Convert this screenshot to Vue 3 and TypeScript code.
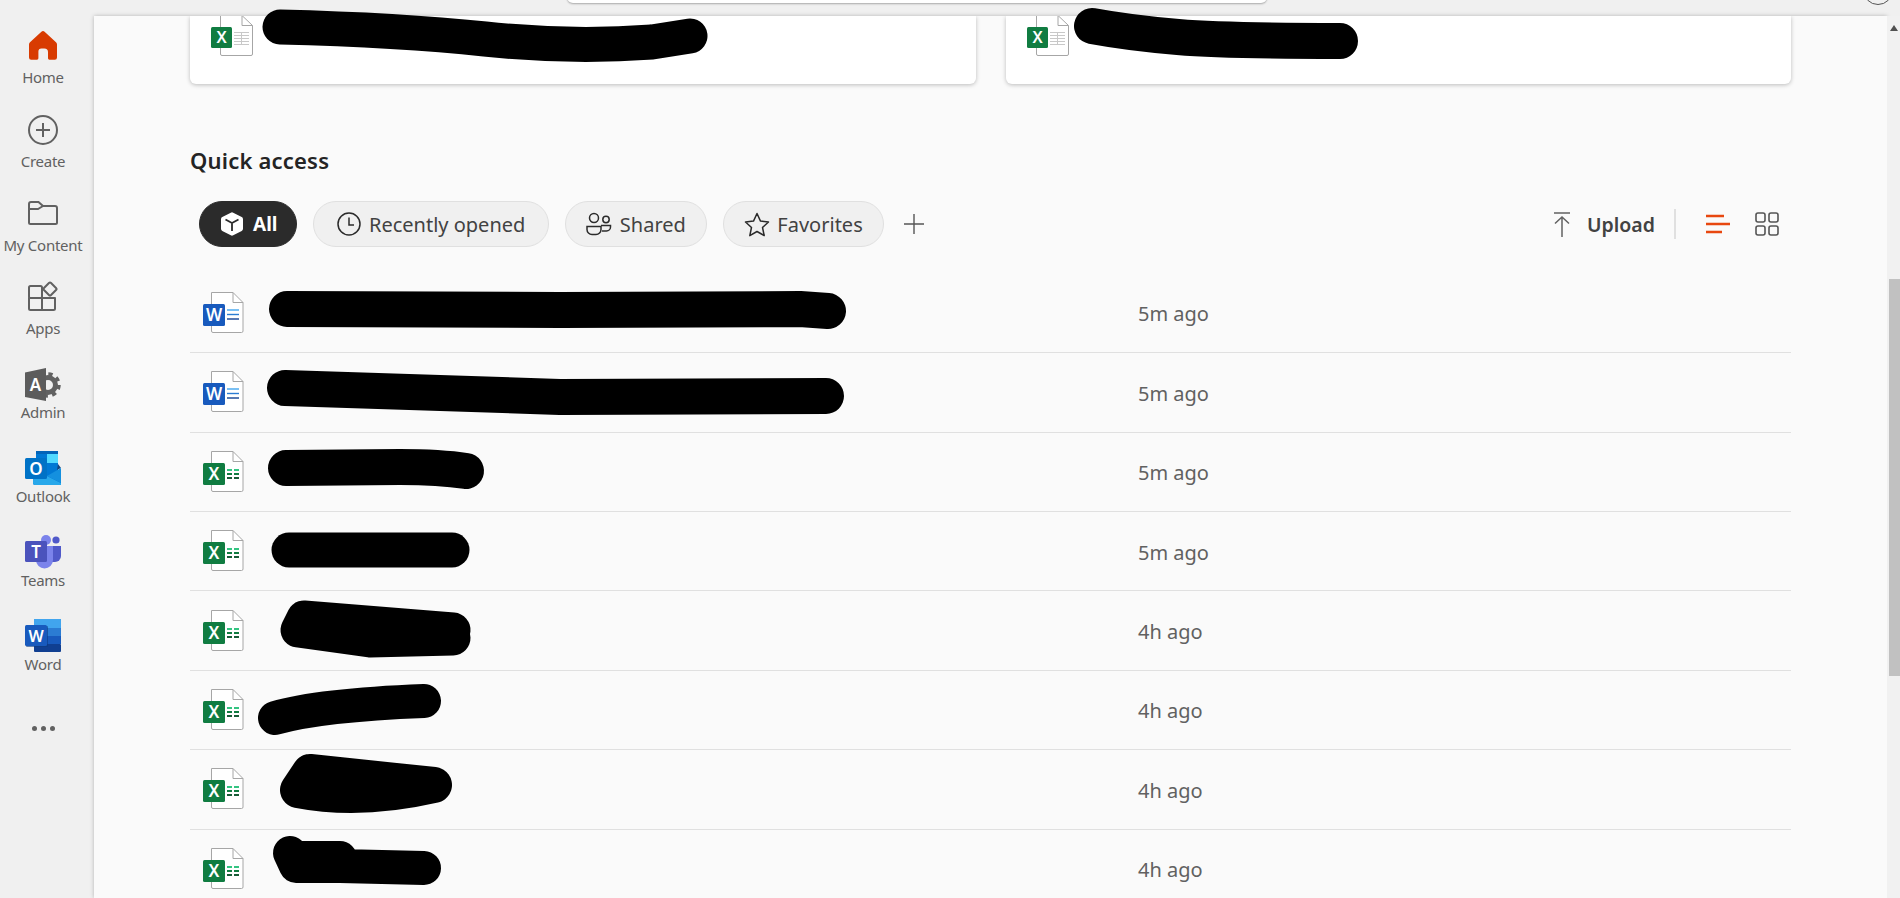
<template>
  <div class="shell">
    <nav class="rail">
      <a v-for="(item, index) in railItems" :key="item.label" class="rail__item">
        <span class="rail__icon" :class="{ 'rail__icon--app': index > 3 }">
          <svg v-if="item.label === 'Home'" width="28" height="29" viewBox="0 0 28 29">
            <path fill="#d83b01" d="M12.4.8a2.3 2.3 0 0 1 3.2 0L27 11.2a3 3 0 0 1 1 2.2v13.1a2.2 2.2 0 0 1-2.2 2.2h-5.4a1.4 1.4 0 0 1-1.4-1.4v-6.2a3.6 3.6 0 0 0-3.6-3.6h-3a3 3 0 0 0-3 3v6.8a1.4 1.4 0 0 1-1.4 1.4H2.200a2.2 2.200 0 0 1-2.200-2.200V13.400a3 3 0 0 1 1-2.200z" />
          </svg>
          <svg v-else-if="item.label === 'Create'" class="rail__create" width="30" height="30" viewBox="0 0 30 30" fill="none" stroke="#616161" stroke-width="2">
            <circle cx="15" cy="15" r="14" />
            <path d="M15 8v14M8 15h14" />
          </svg>
          <svg v-else-if="item.label === 'My Content'" width="30" height="24" viewBox="0 0 30 24" fill="none" stroke="#616161" stroke-width="2">
            <path d="M1 20.500V3a2 2 0 0 1 2-2h7.500l4.500 4h12a2 2 0 0 1 2 2v14.500a1.500 1.500 0 0 1-1.500 1.500H2.500A1.500 1.500 0 0 1 1 21.500z" />
            <path d="M1 8h9l5-3" />
          </svg>
          <svg v-else-if="item.label === 'Apps'" width="30" height="30" viewBox="0 0 30 30" fill="none" stroke="#616161" stroke-width="2" stroke-linejoin="round">
            <rect x="1" y="5" width="13" height="12" rx="1.500" />
            <path d="M1 17h13v12H2.500A1.500 1.500 0 0 1 1 27.500zM14 17h13v10.500a1.500 1.500 0 0 1-1.500 1.500H14z" />
            <rect x="17" y="3" width="10" height="10" rx="1.500" transform="rotate(45 22 8)" />
          </svg>
          <svg v-else-if="item.label === 'Admin'" width="36" height="34" viewBox="0 0 36 34">
            <circle cx="23" cy="17" r="7.500" fill="none" stroke="#616161" stroke-width="5" />
            <circle cx="23" cy="17" r="11" fill="none" stroke="#616161" stroke-width="3.500" stroke-dasharray="4.300 4.340" />
            <path fill="#5c5c5c" d="M0 4.500 21 0v33L0 29z" />
            <text x="10.500" y="23" class="badge-text" font-size="17" text-anchor="middle">A</text>
          </svg>
          <svg v-else-if="item.label === 'Outlook'" width="36" height="34" viewBox="0 0 36 34">
            <rect x="11" y="0" width="22" height="20" fill="#0078d4" />
            <rect x="11" y="0" width="22" height="3" fill="#0364b8" />
            <rect x="22" y="3" width="11" height="9" fill="#50d9ff" />
            <path fill="#14447d" d="M33 13l3 4-4 2z" />
            <path fill="#0078d4" d="M8 20h28v14H10a2 2 0 0 1-2-2z" />
            <path fill="#28a8ea" d="M8 15l14 10 14 7v2H10a2 2 0 0 1-2-2z" />
            <path fill="#1490df" d="M22 25l14-8v15z" />
            <rect x="0" y="7" width="22" height="21" rx="1.500" fill="#0072c6" />
            <text x="11" y="23.500" class="badge-text" font-size="17" text-anchor="middle">O</text>
          </svg>
          <svg v-else-if="item.label === 'Teams'" width="36" height="34" viewBox="0 0 36 34">
            <circle cx="31" cy="5" r="3.600" fill="#5059c9" />
            <path fill="#5059c9" d="M26 11h10v10a6 6 0 0 1-6 6h-4z" />
            <circle cx="21" cy="5" r="5" fill="#7b83eb" />
            <path fill="#7b83eb" d="M11 11h17v14a8.500 8.500 0 0 1-17 0z" />
            <rect x="0" y="6" width="22" height="21" rx="1.500" fill="#4b53bc" />
            <text x="11" y="22.500" class="badge-text" font-size="17" text-anchor="middle">T</text>
          </svg>
          <svg v-else-if="item.label === 'Word'" width="36" height="34" viewBox="0 0 36 34">
            <rect x="9" y="0" width="27" height="9" fill="#41a5ee" />
            <rect x="9" y="9" width="27" height="8" fill="#2b7cd3" />
            <rect x="9" y="17" width="27" height="8" fill="#185abd" />
            <rect x="9" y="25" width="27" height="8" rx="1" fill="#103f91" />
            <rect x="1" y="7" width="22" height="21" rx="1" fill="#0b3a80" opacity="0.6" />
            <rect x="0" y="6" width="22" height="21" rx="1.500" fill="#185abd" />
            <text x="11" y="22.500" class="badge-text" font-size="16" text-anchor="middle">W</text>
          </svg>
        </span>
        <span class="rail__label">{{ item.label }}</span>
      </a>
      <button class="rail__more" type="button" aria-label="More apps">
        <i></i><i></i><i></i>
      </button>
    </nav>

    <div class="stage">
      <header class="topbar">
        <div class="topbar__search"></div>
        <div class="topbar__avatar"></div>
      </header>

      <div class="stage__body">
        <main class="content">
          <section class="cards">
            <article v-for="card in 2" :key="card" class="card">
              <svg class="card__icon" width="42" height="41" viewBox="0 0 42 41">
                <path fill="#fff" stroke="#a6a6a6" d="M9.500.5H31L41.500 10.500V39a1.500 1.500 0 0 1-1.500 1.500H11A1.500 1.500 0 0 1 9.500 39z" />
                <path fill="none" stroke="#a6a6a6" d="M31 .5v10h10.500" />
                <g stroke="#c8c8c8" stroke-width="1">
                  <path d="M23 17.500h15M23 20.500h15M23 23.500h15M23 26.500h15M23 29.500h15M30.500 17v13" />
                </g>
                <rect x="0" y="12" width="21" height="21" rx="1.500" fill="#107c41" />
                <text x="10.500" y="28" class="badge-text" font-size="16" text-anchor="middle">X</text>
              </svg>
            </article>
          </section>

          <h2 class="heading">Quick access</h2>

          <div class="toolbar">
            <div class="chips">
              <button
                v-for="chip in chips"
                :key="chip"
                class="chip"
                :class="{ 'chip--active': chip === 'All', 'chip--wide': chip === 'Recently opened' }"
                type="button"
              >
                <svg v-if="chip === 'All'" width="24" height="24" viewBox="0 0 24 24">
                  <path fill="#fff" d="M10.800.7a2.500 2.500 0 0 1 2.400 0l8.500 4.400A2.300 2.300 0 0 1 23 7.200v9.600a2.300 2.300 0 0 1-1.300 2.100l-8.500 4.400a2.500 2.500 0 0 1-2.400 0l-8.500-4.400A2.300 2.300 0 0 1 1 16.800V7.200a2.300 2.300 0 0 1 1.300-2.100z" />
                  <path fill="none" stroke="#2b2b2b" stroke-width="1.800" d="M5.500 7.500 12 11l6.500-3.500M12 11v8" />
                </svg>
                <svg v-else-if="chip === 'Recently opened'" width="24" height="24" viewBox="0 0 24 24" fill="none" stroke="#2b2b2b" stroke-width="1.500">
                  <circle cx="12" cy="12" r="11" />
                  <path d="M12 5.500V13h5" />
                </svg>
                <svg v-else-if="chip === 'Shared'" width="26" height="24" viewBox="0 0 26 24" fill="none" stroke="#2b2b2b" stroke-width="1.500">
                  <circle cx="8" cy="6" r="4.500" />
                  <circle cx="20" cy="7.500" r="3.200" />
                  <path d="M1 14.500h14v3a5 5 0 0 1-5 5H6a5 5 0 0 1-5-5z" />
                  <path d="M15 13.500h9.500v1.500a4 4 0 0 1-4 4H16" />
                </svg>
                <svg v-else width="26" height="25" viewBox="0 0 26 25" fill="none" stroke="#2b2b2b" stroke-width="1.500" stroke-linejoin="round">
                  <path d="m13 1.500 3.500 7.600 8 .9-6 5.500 1.700 8.100-7.200-4.100-7.200 4.100 1.700-8.100-6-5.500 8-.9z" />
                </svg>
                <span>{{ chip }}</span>
              </button>
              <svg class="chips__add" width="22" height="22" viewBox="0 0 22 22" stroke="#555" stroke-width="1.400">
                <path d="M11 1v20M1 11h20" />
              </svg>
            </div>

            <div class="actions">
              <svg width="16" height="25" viewBox="0 0 16 25" fill="none" stroke="#616161" stroke-width="1.500">
                <path d="M0 1h16M8 25V5M1 11.500 8 5l7 6.500" />
              </svg>
              <span class="actions__upload">Upload</span>
              <span class="actions__divider"></span>
              <svg class="actions__list" width="25" height="20" viewBox="0 0 25 20" stroke="#e8470f" stroke-width="2.400">
                <path d="M0 2h18M0 10h24M0 18h16" />
              </svg>
              <svg width="24" height="24" viewBox="0 0 24 24" fill="none" stroke="#555" stroke-width="1.600">
                <rect x="1" y="1" width="9" height="9" rx="2" />
                <rect x="14" y="1" width="9" height="9" rx="2" />
                <rect x="1" y="14" width="9" height="9" rx="2" />
                <rect x="14" y="14" width="9" height="9" rx="2" />
              </svg>
            </div>
          </div>

          <ul class="files">
            <li v-for="(file, index) in files" :key="index" class="file">
              <svg class="file__icon" width="41" height="41" viewBox="0 0 41 41">
                <path fill="#fff" stroke="#a6a6a6" d="M8.500.5H30L40 10.500V39a1.500 1.500 0 0 1-1.500 1.500H10A1.500 1.500 0 0 1 8.500 39z" />
                <path fill="none" stroke="#a6a6a6" d="M30 .5v10h10" />
                <g v-if="file.kind === 'word'" stroke-width="1.400">
                  <path stroke="#41a5ee" d="M24 18h12" />
                  <path stroke="#2b7cd3" d="M24 22.500h12" />
                  <path stroke="#103f91" d="M24 27h12" />
                </g>
                <g v-else stroke-width="2">
                  <path stroke="#33c481" d="M24 19h5M31 19h5" />
                  <path stroke="#107c41" d="M24 23h5M31 23h5" />
                  <path stroke="#185c37" d="M24 27h5M31 27h5" />
                </g>
                <rect x="0" y="12" width="22" height="22" rx="1.500" :fill="file.kind === 'word' ? '#185abd' : '#107c41'" />
                <text x="11" y="29" class="badge-text" font-size="17" text-anchor="middle">{{ file.kind === 'word' ? 'W' : 'X' }}</text>
              </svg>
              <span class="file__time">{{ file.time }}</span>
            </li>
          </ul>
        </main>

        <div class="scrollbar">
          <span class="scrollbar__arrow"></span>
          <span class="scrollbar__thumb"></span>
        </div>
      </div>
    </div>

    <!-- hand-drawn redaction strokes over the names -->
    <svg class="redactions" width="1900" height="898" fill="none" stroke="#000" stroke-linecap="round" stroke-linejoin="round">
      <path v-for="mark in redactions" :key="mark.d" :d="mark.d" :stroke-width="mark.width" />
    </svg>
  </div>
</template>

<script setup lang="ts">
interface FileRow {
  kind: 'word' | 'excel';
  time: string;
}

const railItems = [
  { label: 'Home' },
  { label: 'Create' },
  { label: 'My Content' },
  { label: 'Apps' },
  { label: 'Admin' },
  { label: 'Outlook' },
  { label: 'Teams' },
  { label: 'Word' },
];

const chips = ['All', 'Recently opened', 'Shared', 'Favorites'];

const files: FileRow[] = [
  { kind: 'word', time: '5m ago' },
  { kind: 'word', time: '5m ago' },
  { kind: 'excel', time: '5m ago' },
  { kind: 'excel', time: '5m ago' },
  { kind: 'excel', time: '4h ago' },
  { kind: 'excel', time: '4h ago' },
  { kind: 'excel', time: '4h ago' },
  { kind: 'excel', time: '4h ago' },
];

const redactions = [
  { d: 'M280 27Q400 30 485 39T652 42L690 36', width: 35 },
  { d: 'M1092 26Q1130 33 1178 37T1340 41', width: 36 },
  { d: 'M287 309L560 310L800 309L828 311', width: 36 },
  { d: 'M285 388Q400 392 560 397L826 396', width: 36 },
  { d: 'M286 468L400 467Q440 467 466 471', width: 36 },
  { d: 'M289 550H452', width: 35 },
  { d: 'M304 618L298 630L370 640L453 638M304 618L453 630', width: 35 },
  { d: 'M275 718Q320 705 424 701', width: 34 },
  { d: 'M310 772L298 790Q360 802 434 785M310 772L434 785', width: 36 },
  { d: 'M290 853L296 866H340L424 868M296 858H340', width: 34 },
];
</script>

<style>
html,
body {
  margin: 0;
  overflow: hidden;
  background: #f0f0f0;
}
</style>

<style scoped>
.shell {
  position: relative;
  display: flex;
  width: 1900px;
  height: 898px;
  overflow: hidden;
  font-family: "Noto Sans", "Open Sans", sans-serif;
  background: #f0f0f0;
  color: #616161;
}

.rail {
  display: flex;
  flex: none;
  flex-direction: column;
  align-items: center;
  gap: 19.8px;
  box-sizing: border-box;
  width: 86px;
  padding-top: 25px;
}

.rail__item {
  display: flex;
  flex-direction: column;
  align-items: center;
  gap: 1px;
  height: 64px;
}

.rail__icon {
  display: flex;
  align-items: center;
  justify-content: center;
  height: 40px;
}

.rail__icon--app {
  box-sizing: border-box;
  padding-top: 9px;
}

.rail__create {
  margin-top: 2px;
}

.rail__label {
  font-size: 15px;
  line-height: 22px;
  white-space: nowrap;
  letter-spacing: -0.25px;
}

.rail__more {
  display: flex;
  gap: 4px;
  align-items: center;
  margin-top: 31px;
  padding: 0;
  border: 0;
  background: none;
}

.rail__more i {
  width: 5px;
  height: 5px;
  border-radius: 50%;
  background: #616161;
}

.stage {
  display: flex;
  flex: 1;
  flex-direction: column;
  min-width: 0;
  padding-left: 8px;
}

.topbar {
  display: flex;
  flex: none;
  height: 16px;
  overflow: hidden;
}

.topbar__search {
  width: 700px;
  height: 30px;
  margin: -27px 0 0 473px;
  border-radius: 6px;
  background: #fff;
  box-shadow: 0 1px 2px rgba(0, 0, 0, 0.3);
}

.topbar__avatar {
  width: 28px;
  height: 28px;
  margin: -25px 0 0 596px;
  border: 1px solid #555;
  border-radius: 50%;
}

.stage__body {
  display: flex;
  flex: 1;
  min-height: 0;
}

.content {
  flex: 1;
  box-sizing: border-box;
  min-width: 0;
  padding: 0 96px;
  overflow: hidden;
  background: #fafafa;
  box-shadow: 0 0 4px rgba(0, 0, 0, 0.25);
}

.cards {
  display: grid;
  grid-template-columns: 786px 785px;
  gap: 30px;
}

.card {
  box-sizing: border-box;
  height: 68px;
  padding-left: 21px;
  border-radius: 0 0 6px 6px;
  background: #fff;
  box-shadow: 0 1px 4px rgba(0, 0, 0, 0.25);
}

.card__icon {
  display: block;
  margin-top: -1px;
}

.heading {
  margin: 61px 0 26px;
  font-size: 22px;
  font-weight: 600;
  line-height: 30px;
  letter-spacing: 0.2px;
  color: #242424;
}

.toolbar {
  display: flex;
  align-items: center;
  justify-content: space-between;
  height: 46px;
  padding-right: 12px;
}

.chips {
  display: flex;
  align-items: center;
  gap: 16px;
  padding-left: 9px;
}

.chip {
  display: flex;
  align-items: center;
  gap: 7.500px;
  box-sizing: border-box;
  height: 46px;
  padding: 0 20px;
  border: 1px solid #e0e0e0;
  border-radius: 23px;
  background: #f0f0f0;
  font: inherit;
  font-size: 20px;
  color: #424242;
}

.chip--wide {
  padding: 0 23px;
}

.chip--active {
  gap: 9px;
  padding: 0 19px 0 20px;
  border-color: #2b2b2b;
  background: #2b2b2b;
  font-size: 19px;
  font-weight: 700;
  color: #fff;
}

.chips__add {
  margin-left: 3px;
}

.actions {
  display: flex;
  align-items: center;
}

.actions__upload {
  margin: 0 19px 0 17px;
  font-size: 19.500px;
  font-weight: 600;
  color: #424242;
}

.actions__divider {
  width: 2px;
  height: 30px;
  margin-right: 30px;
  background: #e0e0e0;
}

.actions__list {
  margin-right: 24px;
}

.files {
  margin: 26.800px 0 0;
  padding: 0;
  list-style: none;
}

.file {
  display: grid;
  grid-template-columns: 41px 894px 1fr;
  align-items: center;
  box-sizing: border-box;
  height: 79.400px;
  padding-left: 13px;
  border-bottom: 1px solid #e0e0e0;
}

.file__icon {
  margin-top: -1px;
}

.file__time {
  grid-column: 3;
  margin-top: 2px;
  font-size: 20px;
  color: #616161;
}

.scrollbar {
  display: flex;
  flex: none;
  flex-direction: column;
  align-items: flex-end;
  width: 13px;
  background: #f1f1f1;
}

.scrollbar__arrow {
  width: 0;
  height: 0;
  margin: 9px 2px 0;
  border-right: 4px solid transparent;
  border-bottom: 6px solid #505050;
  border-left: 4px solid transparent;
}

.scrollbar__thumb {
  width: 11px;
  height: 397px;
  margin-top: 248px;
  background: #c1c1c1;
}

.redactions {
  position: absolute;
  top: 0;
  left: 0;
  pointer-events: none;
}

.badge-text {
  font-family: "Noto Sans", sans-serif;
  font-weight: 600;
  fill: #fff;
}
</style>
